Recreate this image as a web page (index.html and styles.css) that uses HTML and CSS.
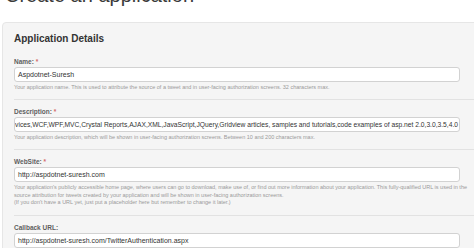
FILE: index.html
```html
<!DOCTYPE html>
<html lang="en">
<head>
<meta charset="utf-8">
<title>Create an application</title>
<link rel="stylesheet" href="styles.css">
</head>
<body>
<div class="page">
  <h1 class="title">Create an application</h1>
  <section class="panel">
    <h2 class="panel-title">Application Details</h2>
    <div class="field">
      <label class="label">Name: <span class="req">*</span></label>
      <div class="input">Aspdotnet-Suresh</div>
      <p class="help">Your application name. This is used to attribute the source of a tweet and in user-facing authorization screens. 32 characters max.</p>
    </div>
    <div class="field">
      <label class="label">Description: <span class="req">*</span></label>
      <div class="input input-end"><span>Aspdotnet-Suresh offers Asp.net,C#.net,SQL Server,Web Services,WCF,WPF,MVC,Crystal Reports,AJAX,XML,JavaScript,JQuery,Gridview articles, samples and tutorials,code examples of asp.net 2.0,3.0,3.5,4.0</span></div>
      <p class="help">Your application description, which will be shown in user-facing authorization screens. Between 10 and 200 characters max.</p>
    </div>
    <div class="field">
      <label class="label">WebSite: <span class="req">*</span></label>
      <div class="input">http://aspdotnet-suresh.com</div>
      <p class="help">Your application's publicly accessible home page, where users can go to download, make use of, or find out more information about your application. This fully-qualified URL is used in the source attribution for tweets created by your application and will be shown in user-facing authorization screens.<br>(If you don't have a URL yet, just put a placeholder here but remember to change it later.)</p>
    </div>
    <div class="field">
      <label class="label">Callback URL:</label>
      <div class="input">http://aspdotnet-suresh.com/TwitterAuthentication.aspx</div>
    </div>
  </section>
</div>
</body>
</html>
```
FILE: styles.css
```css
html, body {
  margin: 0;
  padding: 0;
  background: #fff;
}
body {
  width: 474px;
  height: 248px;
  overflow: hidden;
  font-family: "Liberation Sans", Arial, sans-serif;
}
.page {
  padding-top: 1px;
}
.title {
  margin: -16px 0 0 5px;
  height: 20px;
  font-size: 20px;
  line-height: 20px;
  font-weight: normal;
  color: #3a3a3a;
  white-space: nowrap;
}
.panel {
  margin: 17px -30px 0 2px;
  padding: 10px 0 0 11px;
  background: #f5f5f5;
  border: 1px solid #e6e6e6;
  border-radius: 4px;
}
.panel-title {
  margin: 0 0 13px;
  font-size: 10px;
  line-height: 12px;
  font-weight: bold;
  color: #333;
}
.field {
  padding: 8px 0 8px;
  border-bottom: 1px solid #e2e2e2;
}
.field:first-of-type {
  padding-top: 0;
}
.label {
  display: block;
  font-size: 6.5px;
  line-height: 8px;
  font-weight: bold;
  color: #5e5e5e;
}
.req {
  color: #d46a6a;
}
.input {
  box-sizing: border-box;
  width: 446px;
  height: 15px;
  margin-top: 1px;
  padding: 0 3px;
  background: #fff;
  border: 1px solid #d2d2d2;
  border-radius: 3px;
  font-size: 7px;
  line-height: 13px;
  color: #333;
  white-space: nowrap;
  overflow: hidden;
}
.input-end {
  display: flex;
  justify-content: flex-end;
  padding-right: 1px;
  font-size: 6.7px;
}
.input-end span {
  flex: none;
}
.help {
  max-width: 458px;
  margin: 2px 0 0;
  font-size: 5.5px;
  line-height: 7px;
  color: #9a9a9a;
}
.field:nth-of-type(3) .help {
  line-height: 7.5px;
}
```
